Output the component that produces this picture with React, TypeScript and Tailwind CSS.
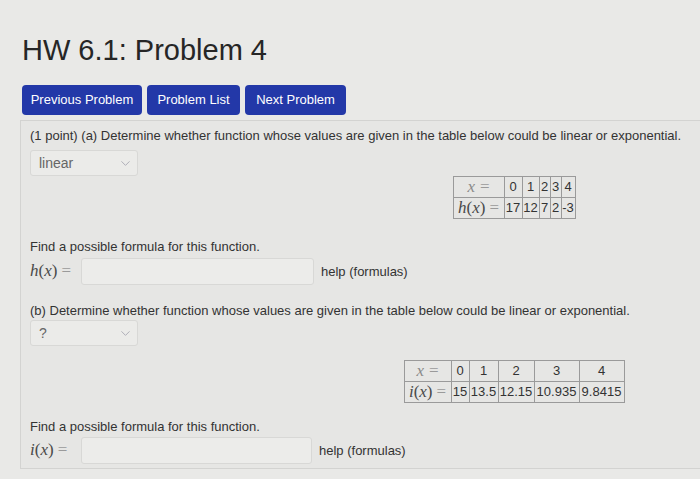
import { ChevronDown } from "lucide-react";

const font = { fontFamily: '"Liberation Sans", Arial, sans-serif' };
const serif = { fontFamily: '"Liberation Serif", "DejaVu Serif", serif' };

function Math({ name }: { name: string }) {
  return (
    <span className="whitespace-nowrap text-[17px] leading-none" style={serif}>
      <span className="italic text-[#4a4a4a]">{name}</span>
      <span className="text-[#4a4a4a]">(</span>
      <span className="italic text-[#4a4a4a]">x</span>
      <span className="text-[#4a4a4a]">)</span>
      <span className="ml-[4px] text-[#9a9a9a]">=</span>
    </span>
  );
}

function XHead() {
  return (
    <span className="text-[17px] leading-none" style={serif}>
      <span className="italic text-[#8a8a8a]">x</span>
      <span className="ml-[5px] text-[#9a9a9a]">=</span>
    </span>
  );
}

function Select({ value }: { value: string }) {
  return (
    <div className="flex items-center justify-between w-[108px] h-[26px] pl-[8px] pr-[4px] rounded-[3px] border border-[#d8d8d6] bg-[#ebebe9] text-[#666] text-[14px]">
      <span>{value}</span>
      <ChevronDown size={15} strokeWidth={1.4} className="text-[#a6a6b0]" />
    </div>
  );
}

function ValueTable({ name, widths, xs, ys }: { name: string; widths: number[]; xs: string[]; ys: string[] }) {
  return (
    <table className="border-collapse text-[13px] leading-[18px] text-[#333]">
      <tbody>
        <tr className="h-[21px]">
          <td className="border border-[#9a9a9a] text-center p-0" style={{ width: widths[0] }}>
            <XHead />
          </td>
          {xs.map((x, i) => (
            <td key={i} className="border border-[#9a9a9a] text-center p-0" style={{ width: widths[i + 1] }}>
              {x}
            </td>
          ))}
        </tr>
        <tr className="h-[21px]">
          <td className="border border-[#9a9a9a] text-center p-0">
            <Math name={name} />
          </td>
          {ys.map((y, i) => (
            <td key={i} className="border border-[#9a9a9a] text-center p-0">
              {y}
            </td>
          ))}
        </tr>
      </tbody>
    </table>
  );
}

function FormulaRow({ name, inputW }: { name: string; inputW: string }) {
  return (
    <div className="flex items-center h-[27px] text-[13px]">
      <span className="w-[51px]">
        <Math name={name} />
      </span>
      <div className={`${inputW} h-[27px] rounded-[3px] border border-[#d8d8d6] bg-[#ececea]`} />
      <span className="ml-[7px] text-[#333]">help (formulas)</span>
    </div>
  );
}

export default function App() {
  return (
    <div className="w-[700px] h-[479px] overflow-hidden bg-[#e9e9e7] text-[#333]" style={font}>
      <div className="pl-[22px] pt-[32px]">
        <h1 className="text-[29px] leading-[36px] text-[#262626]">HW 6.1: Problem 4</h1>
        <div className="flex gap-[5px] mt-[17px]">
          <button className="w-[120px] h-[30px] rounded-[4px] bg-[#2338a8] text-white text-[13px]">Previous Problem</button>
          <button className="w-[93px] h-[30px] rounded-[4px] bg-[#2338a8] text-white text-[13px]">Problem List</button>
          <button className="w-[101px] h-[30px] rounded-[4px] bg-[#2338a8] text-white text-[13px]">Next Problem</button>
        </div>
      </div>
      <div className="ml-[20px] mt-[5px] w-[990px] h-[349px] border border-[#d3d3d1] bg-[#e6e6e4] pl-[9px] pt-[7px] text-[13px] text-[#333]">
        <p className="leading-[16px]">
          (1 point) (a) Determine whether function whose values are given in the table below could be linear or exponential.
        </p>
        <div className="mt-[6px]">
          <Select value="linear" />
        </div>
        <div className="w-[968px] flex justify-center">
          <ValueTable name="h" widths={[51, 18, 17, 11, 11, 14]} xs={["0", "1", "2", "3", "4"]} ys={["17", "12", "7", "2", "-3"]} />
        </div>
        <p className="mt-[20px] leading-[16px]">Find a possible formula for this function.</p>
        <div className="mt-[3px]">
          <FormulaRow name="h" inputW="w-[233px]" />
        </div>
        <p className="mt-[18px] leading-[16px]">
          (b) Determine whether function whose values are given in the table below could be linear or exponential.
        </p>
        <div className="mt-[1px]">
          <Select value="?" />
        </div>
        <div className="w-[968px] flex justify-center mt-[14px]">
          <ValueTable
            name="i"
            widths={[47, 18, 29, 36, 45, 45]}
            xs={["0", "1", "2", "3", "4"]}
            ys={["15", "13.5", "12.15", "10.935", "9.8415"]}
          />
        </div>
        <p className="mt-[16px] leading-[16px]">Find a possible formula for this function.</p>
        <div className="mt-[2px]">
          <FormulaRow name="i" inputW="w-[231px]" />
        </div>
      </div>
    </div>
  );
}
